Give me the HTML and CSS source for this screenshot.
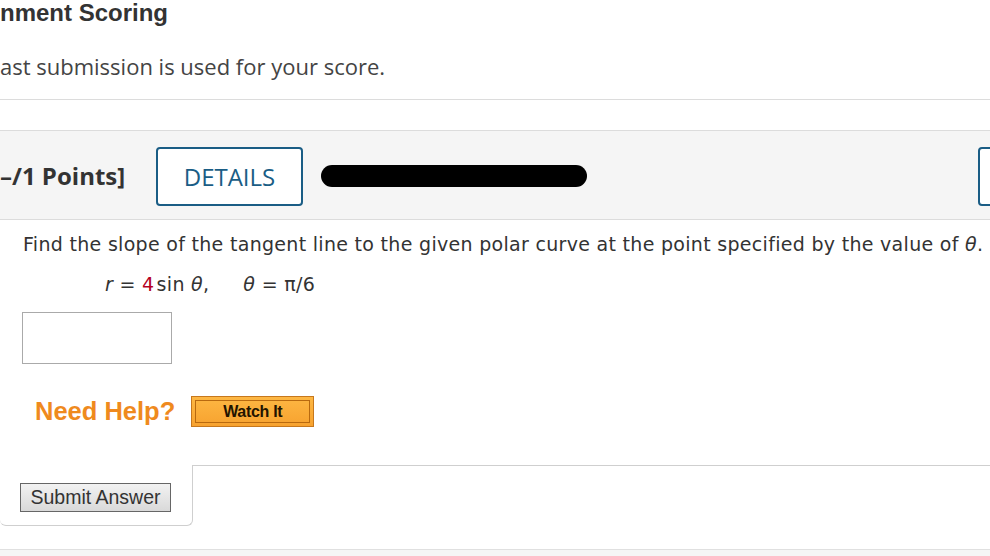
FILE: index.html
```html
<!DOCTYPE html>
<html>
<head>
<meta charset="utf-8">
<link rel="stylesheet" href="styles.css">
</head>
<body>
<div class="page">
  <h2 class="title">nment Scoring</h2>
  <p class="note">ast submission is used for your score.</p>
  <div class="rule"></div>
  <div class="band">
    <span class="points">–/1 Points]</span>
    <button class="details">DETAILS</button>
    <span class="redact"></span>
    <span class="spacer"></span>
    <span class="edge-btn"></span>
  </div>
  <div class="question">
    <p class="prompt">Find the slope of the tangent line to the given polar curve at the point specified by the value of <i class="var">θ</i>.</p>
    <p class="formula"><i class="var">r</i> = <span class="red">4</span>&#8202;sin <i class="var">θ</i>,<span class="gap"></span><i class="var">θ</i> = π/6</p>
    <div class="answer"></div>
    <div class="help">
      <span class="need">Need Help?</span>
      <span class="watch"><span class="watch-inner">Watch It</span></span>
    </div>
  </div>
  <div class="submit-row">
    <div class="submit-tab"><button class="submit">Submit Answer</button></div>
    <div class="submit-rest"></div>
  </div>
  <div class="footer"></div>
</div>
</body>
</html>
```
FILE: styles.css
```css
html, body {
  margin: 0;
  padding: 0;
  background: #fff;
}
.page {
  width: 990px;
  height: 556px;
  overflow: hidden;
}
.title {
  margin: 0;
  font-family: "Liberation Sans", Arial, sans-serif;
  font-weight: bold;
  font-size: 24px;
  line-height: 26px;
  color: #333;
}
.note {
  margin: 25px 0 0 0;
  font-family: "Open Sans", sans-serif;
  font-size: 22px;
  line-height: 30px;
  color: #444;
}
.rule {
  margin-top: 18px;
  height: 1px;
  background: #dcdcdc;
}
.band {
  margin-top: 30px;
  height: 88px;
  background: #f5f5f5;
  border-top: 1px solid #dcdcdc;
  border-bottom: 1px solid #dcdcdc;
  display: flex;
  align-items: center;
}
.points {
  font-family: "Open Sans", sans-serif;
  font-weight: bold;
  font-size: 24px;
  color: #333;
  width: 156px;
}
.details {
  box-sizing: border-box;
  width: 147px;
  height: 59px;
  border: 2px solid #1a5d85;
  border-radius: 4px;
  background: #fff;
  font-family: "Open Sans", sans-serif;
  font-size: 24px;
  color: #1a5d85;
  padding: 0;
  margin-top: 2px;
}
.redact {
  width: 266px;
  height: 22px;
  background: #000;
  border-radius: 12px;
  margin-left: 18px;
  margin-top: 2px;
}
.spacer {
  flex: 1;
}
.edge-btn {
  box-sizing: border-box;
  width: 20px;
  height: 59px;
  border: 2px solid #1a5d85;
  border-radius: 4px;
  background: #fff;
  margin-right: -8px;
  margin-top: 2px;
}
.question {
  padding-left: 23px;
}
.prompt {
  margin: 12px 0 0 0;
  font-family: "DejaVu Sans", Verdana, sans-serif;
  font-size: 19px;
  letter-spacing: 0.3px;
  line-height: 24px;
  color: #333;
  white-space: nowrap;
}
.var {
  font-family: "DejaVu Sans", Verdana, sans-serif;
  font-style: italic;
}
.formula {
  margin: 16px 0 0 82px;
  font-family: "DejaVu Sans", Verdana, sans-serif;
  font-size: 19px;
  letter-spacing: 0.3px;
  line-height: 24px;
  color: #333;
  white-space: nowrap;
}
.gap {
  display: inline-block;
  width: 34px;
}
.red {
  color: #b5001f;
}
.answer {
  margin-top: 16px;
  width: 148px;
  height: 50px;
  border: 1px solid #aaa;
  margin-left: -1px;
}
.help {
  margin-top: 31px;
  margin-left: 12px;
  display: flex;
  align-items: center;
  gap: 16px;
}
.need {
  font-family: "Liberation Sans", Arial, sans-serif;
  font-weight: bold;
  font-size: 25.5px;
  color: #ef8a1e;
}
.watch {
  box-sizing: border-box;
  width: 123px;
  height: 31px;
  border: 1px solid #c7781d;
  background: linear-gradient(#fdb743, #f7a22f);
  padding: 3px;
  display: flex;
  margin-top: 1px;
}
.watch-inner {
  flex: 1;
  border: 1px solid #b8690f;
  display: flex;
  align-items: center;
  justify-content: center;
  font-family: "Liberation Sans", Arial, sans-serif;
  font-weight: bold;
  font-size: 16px;
  letter-spacing: -0.3px;
  color: #231400;
}
.submit-row {
  margin-top: 38px;
  display: flex;
}
.submit-tab {
  box-sizing: border-box;
  width: 193px;
  height: 61px;
  border-right: 1px solid #cfcfcf;
  border-bottom: 1px solid #cfcfcf;
  border-bottom-right-radius: 6px;
  border-bottom-left-radius: 6px;
  padding: 18px 0 0 20px;
}
.submit-rest {
  flex: 1;
  border-top: 1px solid #cfcfcf;
}
.submit {
  box-sizing: border-box;
  width: 151px;
  height: 29px;
  border: 1px solid #666;
  border-radius: 0;
  background: linear-gradient(#f2f2f2, #d9d9d9);
  font-family: "Liberation Sans", Arial, sans-serif;
  font-size: 19.5px;
  color: #333;
  padding: 0;
}
.footer {
  margin-top: 23px;
  height: 10px;
  border-top: 1px solid #e0e0e0;
  background: #f5f5f5;
}
```
